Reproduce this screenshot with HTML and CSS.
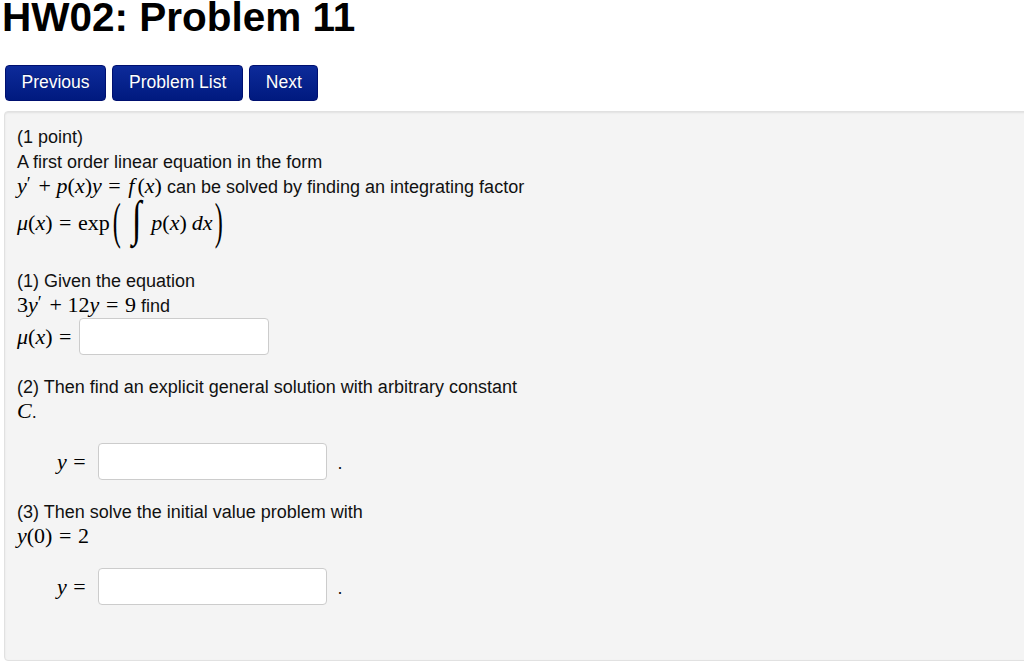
FILE: index.html
```html
<!DOCTYPE html>
<html>
<head>
<meta charset="utf-8">
<link rel="stylesheet" href="styles.css">
</head>
<body>
<h1 class="title">HW02: Problem 11</h1>
<div class="nav">
  <a class="btn">Previous</a>
  <a class="btn">Problem List</a>
  <a class="btn">Next</a>
</div>
<div class="panel">
  <div class="line">(1 point)</div>
  <div class="line">A first order linear equation in the form</div>
  <div class="line"><span class="m"><i>y</i><span class="prime">′</span><span class="bin">+</span><i>p</i>(<i>x</i>)<i>y</i><span class="rel">=</span><i class="ff">f</i>(<i>x</i>)</span> can be solved by finding an integrating factor</div>
  <div class="line tall"><span class="m"><i>μ</i>(<i>x</i>)<span class="rel">=</span>exp<span class="bigp">(</span><span class="int">∫</span><i>p</i>(<i>x</i>)<span class="thin"></span><i>d</i><i>x</i><span class="bigp">)</span></span></div>

  <div class="line sec">(1) Given the equation</div>
  <div class="line"><span class="m">3<i>y</i><span class="prime">′</span><span class="bin">+</span>12<i>y</i><span class="rel">=</span>9</span> find</div>
  <div class="row"><span class="m"><i>μ</i>(<i>x</i>)<span class="rel">=</span></span><span class="input w1"></span></div>

  <div class="line sec">(2) Then find an explicit general solution with arbitrary constant</div>
  <div class="line"><span class="m"><i>C</i></span>.</div>
  <div class="row rsec indent"><span class="m"><i>y</i><span class="rel">=</span></span><span class="input w2"></span><span class="dot">.</span></div>

  <div class="line sec">(3) Then solve the initial value problem with</div>
  <div class="line"><span class="m"><i>y</i>(0)<span class="rel">=</span>2</span></div>
  <div class="row rsec indent"><span class="m"><i>y</i><span class="rel">=</span></span><span class="input w2"></span><span class="dot">.</span></div>
</div>
</body>
</html>
```

FILE: styles.css
```css
html, body {
  margin: 0;
  padding: 0;
  background: #ffffff;
  overflow: hidden;
}
body {
  width: 1024px;
  height: 664px;
  font-family: "Liberation Sans", Arial, Helvetica, sans-serif;
  color: #111;
}
.title {
  margin: 0;
  padding-left: 2px;
  height: 34px;
  font-size: 40.5px;
  line-height: 34px;
  font-weight: bold;
  color: #000;
}
.nav {
  display: flex;
  gap: 6px;
  margin-top: 31px;
  padding-left: 5px;
  height: 36px;
}
.btn {
  display: flex;
  align-items: center;
  justify-content: center;
  box-sizing: border-box;
  height: 36px;
  padding: 0 15.5px 1px;
  font-size: 17.5px;
  color: #fff;
  background: linear-gradient(#0d2b9a, #001a7f);
  border: 1px solid #001070;
  border-radius: 4px;
  text-shadow: 0 -1px 0 rgba(0,0,0,.25);
}
.btn:nth-child(2) {
  padding: 0 16px 1px;
}
.panel {
  margin-top: 10px;
  margin-left: 4px;
  width: 1060px;
  height: 550px;
  box-sizing: border-box;
  padding: 12px 12px 0 12px;
  background: #f4f4f4;
  border: 1px solid #e1e1e1;
  border-radius: 4px;
  box-shadow: inset 0 1px 2px rgba(0,0,0,.08);
  font-size: 18px;
}
.line {
  box-sizing: border-box;
  height: 25px;
  padding-top: 2px;
  line-height: 23px;
  white-space: nowrap;
}
.line.tall {
  height: 50px;
  padding-top: 1px;
  line-height: 49px;
}
.sec {
  margin-top: 18.5px;
}
.row {
  display: flex;
  align-items: center;
  height: 38px;
}
.row.rsec {
  margin-top: 18.5px;
}
.indent {
  padding-left: 40px;
}
.m {
  font-family: "Liberation Serif", "Times New Roman", serif;
  font-size: 22px;
  line-height: 20px;
  color: #000;
}
.m i {
  font-style: italic;
}
.ff {
  padding-left: 1px;
  padding-right: 3px;
}
.prime {
  font-size: 18px;
  position: relative;
  top: -3px;
  margin-right: 2px;
}
.bin {
  margin: 0 0.26em;
}
.rel {
  margin: 0 0.3em;
}
.thin {
  display: inline-block;
  width: 5px;
}
.bigp {
  display: inline-block;
  font-size: 22px;
  transform: scale(1.1, 2.3);
  margin: 0 3px;
  position: relative;
  top: -1px;
}
.int {
  display: inline-block;
  font-size: 26px;
  font-style: italic;
  transform: scale(1.35, 1.9);
  margin: 0 11px 0 10px;
  position: relative;
  top: -2px;
}
.input {
  display: inline-block;
  box-sizing: border-box;
  height: 37px;
  background: #fff;
  border: 1px solid #cccccc;
  border-radius: 4px;
  margin-left: 1px;
}
.w1 { width: 190px; }
.w2 { width: 229px; margin-left: 6px; }
.dot {
  font-size: 18px;
  margin-left: 10px;
  position: relative;
  top: 2px;
}
```
